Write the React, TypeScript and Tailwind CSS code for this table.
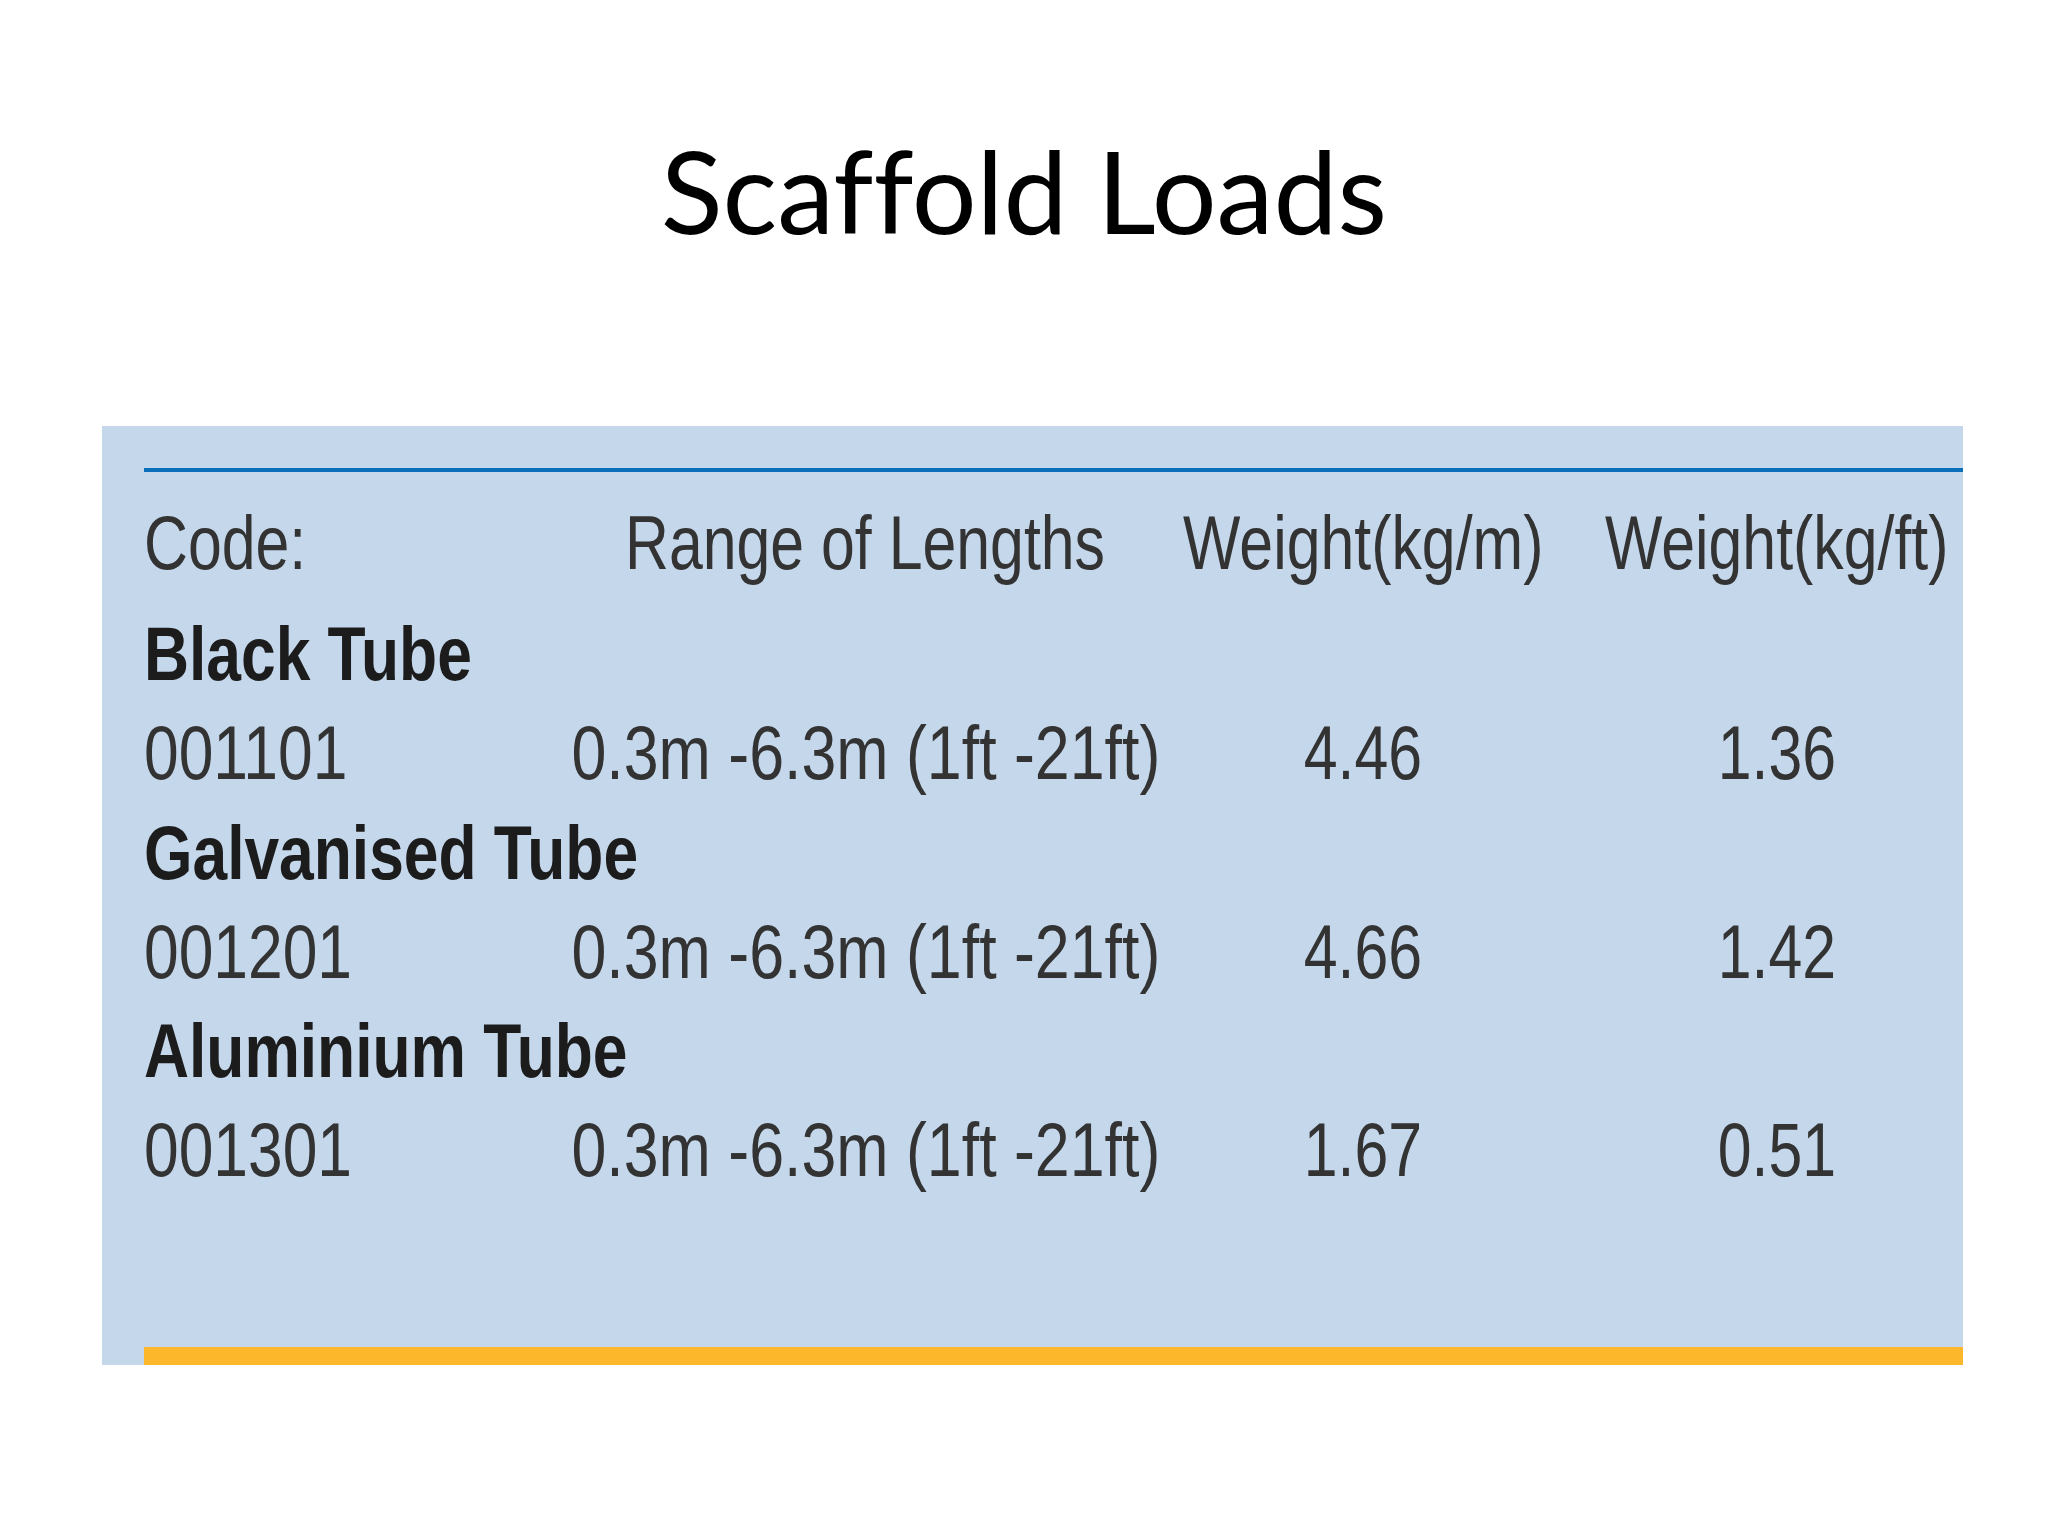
import React from "react";

type Row = { name: string; code: string; range: string; m: string; ft: string };

const rows: Row[] = [
  { name: "Black Tube", code: "001101", range: "0.3m -6.3m (1ft -21ft)", m: "4.46", ft: "1.36" },
  { name: "Galvanised Tube", code: "001201", range: "0.3m -6.3m (1ft -21ft)", m: "4.66", ft: "1.42" },
  { name: "Aluminium Tube", code: "001301", range: "0.3m -6.3m (1ft -21ft)", m: "1.67", ft: "0.51" },
];

const grid = "grid grid-cols-[429px_585px_410px_418px] h-[99.2px] leading-[99.2px]";

function Left({ children, bold, wide }: { children: React.ReactNode; bold?: boolean; wide?: boolean }) {
  return (
    <div className="flex justify-start">
      <span
        className={
          "inline-block whitespace-nowrap origin-left " +
          (wide ? "scale-x-[0.82] " : "scale-x-[0.8] ") +
          (bold ? "font-bold text-[#1c1c1c]" : "text-[#333333]")
        }
      >
        {children}
      </span>
    </div>
  );
}

function Center({ children, wide }: { children: React.ReactNode; wide?: boolean }) {
  return (
    <div className="flex justify-center">
      <span
        className={
          "inline-block whitespace-nowrap origin-center text-[#333333] " +
          (wide ? "scale-x-[0.825]" : "scale-x-[0.8]")
        }
      >
        {children}
      </span>
    </div>
  );
}

export default function App() {
  return (
    <div className="w-[2048px] h-[1536px] bg-white overflow-hidden">
      <div className="h-[426px] pt-[133px]">
        <h1 className="text-center text-[114.5px] leading-none font-normal text-black font-['Lato',sans-serif] [font-variant-ligatures:none]">
          Scaffold Loads
        </h1>
      </div>
      <div className="ml-[102px] w-[1861px] h-[939px] bg-[#c5d7eb] flex flex-col font-['Liberation_Sans',Arial,sans-serif] text-[76px]">
        <div className="mt-[42px] ml-[42px] h-[4px] bg-[#0a6fb8]" />
        <div className="pl-[42px] mt-[21px]">
          <div className={grid}>
            <Left>Code:</Left>
            <Center>Range of Lengths</Center>
            <Center>Weight(kg/m)</Center>
            <Center>Weight(kg/ft)</Center>
          </div>
          <div className="mt-[12px]">
            {rows.map((r) => (
              <React.Fragment key={r.code}>
                <div className={grid}>
                  <div className="col-span-4">
                    <Left bold wide>
                      {r.name}
                    </Left>
                  </div>
                </div>
                <div className={grid}>
                  <Left wide>{r.code}</Left>
                  <Center wide>{r.range}</Center>
                  <Center>{r.m}</Center>
                  <Center>{r.ft}</Center>
                </div>
              </React.Fragment>
            ))}
          </div>
        </div>
        <div className="mt-auto ml-[42px] h-[18px] bg-[#fdb72a]" />
      </div>
    </div>
  );
}
